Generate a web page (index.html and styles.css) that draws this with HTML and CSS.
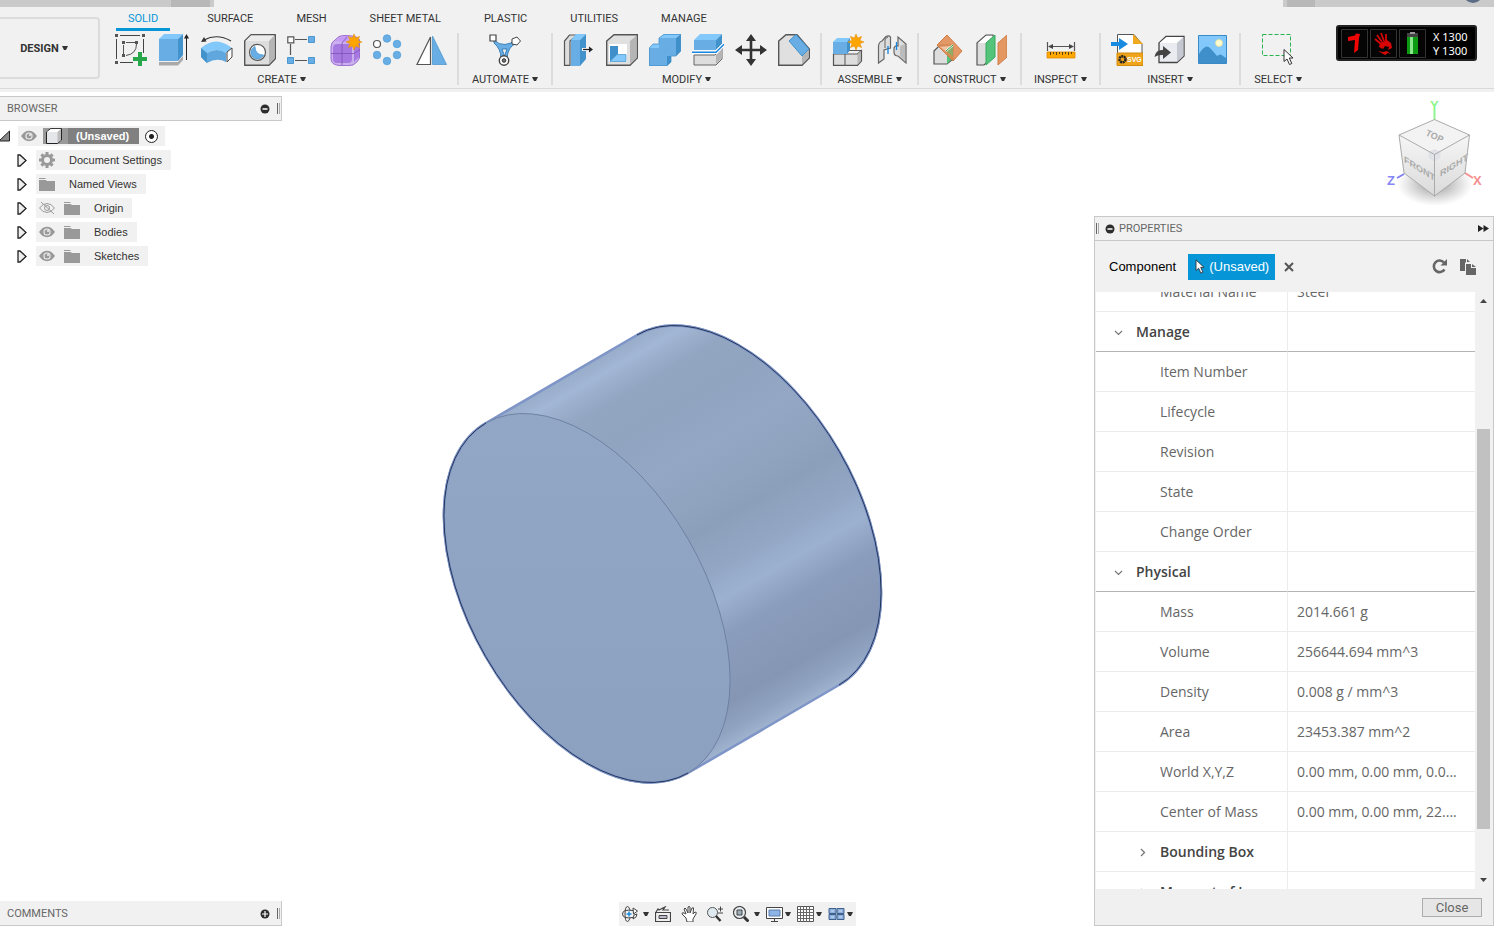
FILE: index.html
```html
<!DOCTYPE html>
<html lang="en">
<head>
    <meta charset="UTF-8">
    <meta name="viewport" content="width=device-width, initial-scale=1.0">
    <title>Design - Unsaved</title>
    <link rel="stylesheet" href="styles.css">
</head>
<body>
    <!-- shared icon shapes -->
    <svg class="defs" width="0" height="0" aria-hidden="true">
        <symbol id="caret" viewBox="0 0 6 5"><path d="M0 0h6L4 4H2z" fill="#333"/></symbol>
        <symbol id="star" viewBox="-8 -8 16 16"><path d="M0-8L1.6-3.9L5.6-5.6L3.9-1.6L8 0L3.9 1.6L5.6 5.6L1.6 3.9L0 8L-1.6 3.9L-5.6 5.6L-3.9 1.6L-8 0L-3.9-1.6L-5.6-5.6L-1.6-3.9z" fill="#ffa500" stroke="#e09010" stroke-width=".6"/></symbol>
        <symbol id="eye" viewBox="0 0 16 12"><path d="M0 6Q3.500.8 8 .8T16 6Q12.500 11.200 8 11.200T0 6z" fill="#999"/><circle cx="8" cy="6" r="3.600" fill="#f1f1f1"/><circle cx="8" cy="6" r="2.500" fill="#999"/><circle cx="9" cy="5" r="1" fill="#f1f1f1"/></symbol>
        <symbol id="eye-off" viewBox="0 0 16 12"><path d="M.5 6Q4 1.500 8 1.500T15.500 6Q12 10.500 8 10.500T.5 6zM2 0L15 12" fill="none" stroke="#999"/><circle cx="8" cy="6" r="2.500" fill="none" stroke="#999"/></symbol>
        <symbol id="folder" viewBox="0 0 16 13"><path d="M0 0h6l1 1H0zM0 2h6.500l1.500 1h8v10H0z" fill="#999"/></symbol>
        <symbol id="expand" viewBox="0 0 10 13"><path d="M1 1h2l6 5.500L3 12H1z" fill="#eee" stroke="#222" stroke-width="1.300"/></symbol>
        <symbol id="minus" viewBox="0 0 10 10"><circle cx="5" cy="5" r="4.500" fill="#2d2d2d"/><path d="M2.500 5h5" stroke="#fff" stroke-width="1.500"/></symbol>
        <symbol id="plus" viewBox="0 0 10 10"><circle cx="5" cy="5" r="4.500" fill="#2d2d2d"/><path d="M2 5h6M5 2v6" stroke="#fff" stroke-width="1.200"/></symbol>
        <symbol id="cursor" viewBox="0 0 11 17"><path d="M1 1v12l3-2.500 2.500 5.500 2.300-1-2.500-5.500H10z" fill="#fff" stroke="#333"/></symbol>
        <symbol id="chev-down" viewBox="0 0 9 6"><path d="M1 1l3.500 3.500L8 1" fill="none" stroke="#777" stroke-width="1.200"/></symbol>
        <symbol id="chev-right" viewBox="0 0 6 9"><path d="M1 1l3.500 3.500L1 8" fill="none" stroke="#777" stroke-width="1.300"/></symbol>
    </svg>

    <header class="ribbon">
        <div class="strip">
            <div class="strip-left"><span></span></div>
            <div class="strip-right"><span></span><svg width="22" height="7"><circle cx="11" cy="-7" r="10" fill="#5c6c84"/></svg></div>
        </div>

        <div class="ribbon-main">
            <button class="workspace-btn">DESIGN <svg class="caret"><use href="#caret"/></svg></button>

            <div class="ribbon-center">
                <nav class="tabs">
                    <button class="tab active">SOLID</button>
                    <button class="tab">SURFACE</button>
                    <button class="tab">MESH</button>
                    <button class="tab">SHEET METAL</button>
                    <button class="tab">PLASTIC</button>
                    <button class="tab">UTILITIES</button>
                    <button class="tab">MANAGE</button>
                </nav>

                <div class="groups">
                    <section class="group">
                        <div class="tools">
                            <button aria-label="Create Sketch"><svg viewBox="0 0 32 32">
                                <path d="M5 1.500h20M1.500 5v20M28.500 5v14M5 28.500h13" fill="none" stroke="#444"/>
                                <path d="M11 8.500h9M8.500 11v9M21.500 10q0 10-10.500 11.500" fill="none" stroke="#555"/>
                                <path d="M0 0h3v3H0zM27 0h3v3h-3zM0 27h3v3H0zM7 7h3v3H7zM20 7h3v3h-3zM7 20h3v3H7z" fill="#555"/>
                                <path d="M23 18h4v5h5v4h-5v5h-4v-5h-5v-4h5z" fill="#26a84a"/>
                            </svg></button>
                            <button aria-label="Extrude"><svg viewBox="0 0 32 32">
                                <path d="M1 28h19l5-6v4l-5 5.500H1z" fill="#aaa"/>
                                <path d="M1 5h19v22H1z" fill="#68aee4"/><path d="M1 5l5-5h19l-5 5z" fill="#83c8fa"/><path d="M20 5l5-5v21l-5 6z" fill="#4292cc"/>
                                <path d="M28.500 3v23" stroke="#222"/><path d="M28.500 0l2.500 4.500h-5z" fill="#222"/>
                            </svg></button>
                            <button aria-label="Revolve"><svg viewBox="0 0 32 32">
                                <path d="M0 14Q15 1 31 14L25 19Q15 13 6 19z" fill="#83c8fa"/>
                                <path d="M0 14L6 19Q16 13 25 19v9Q16 23 6 29L0 23z" fill="#5fa7dd"/><path d="M0 14l6 5v10l-6-6z" fill="#4292cc"/>
                                <path d="M26 18l5-4v9l-5 5z" fill="#fff" stroke="#444"/>
                                <path d="M3 6Q16-1 30 7" fill="none" stroke="#333" stroke-width="1.200"/><path d="M0 8l3-5 2.500 4.500z" fill="#333"/>
                            </svg></button>
                            <button aria-label="Hole"><svg viewBox="0 0 32 32">
                                <path d="M.7 7L7 .7h24.300v24L25 31.300H.7z" fill="#ddd" stroke="#555" stroke-width="1.400" stroke-linejoin="round"/>
                                <path d="M1.500 7L7 1.400h23L25 7z" fill="#ececec"/><path d="M25 7l5.500-5.500V24L25 30.500z" fill="#b5b5b5"/>
                                <circle cx="13.500" cy="18.300" r="8" fill="#fff" stroke="#555" stroke-width="1.200"/><path d="M11 12.500A6.500 6.500 0 1 0 19.500 21Q11 21 11 12.500z" fill="#68aee4" stroke="#4292cc" stroke-width=".7"/>
                            </svg></button>
                            <button aria-label="Pattern"><svg viewBox="0 0 32 32">
                                <path d="M8 5.500h12M3.500 10v11M8 26.500h12" stroke="#555" stroke-width="1.200"/>
                                <path d="M.8 2.800h6v6h-6z" fill="#fff" stroke="#555" stroke-width="1.200"/>
                                <path d="M21.500 2.500h6v6h-6zM.5 23.500h6v6h-6zM21.500 23.500h6v6h-6z" fill="#68aee4" stroke="#4b98d1"/>
                            </svg></button>
                            <button aria-label="Create Form"><svg viewBox="0 0 32 32">
                                <path d="M1 13Q1 8 5 6L9 2.500Q11 1.500 16 1.500Q29 2 29.500 6V24Q28 28 23 31Q18 32 10 31.500Q1 31 1 25z" fill="#cbb0ee" stroke="#9b6dd2"/>
                                <path d="M5 7Q10 2 14 2h7l-5 6z" fill="#c59bf5"/>
                                <path d="M3 14Q3 10 7 10h11q4 0 4 4v11q0 4-4 4H7q-4 0-4-4z" fill="#a679e0"/>
                                <path d="M24 13l5-4v14l-5 5z" fill="#a679e0"/>
                                <path d="M12 9v22M1 19.500h23l6-4M12 9l5-6" fill="none" stroke="#7d4fb8" stroke-width=".8"/>
                                <use href="#star" x="16" y="0" width="16" height="16"/>
                            </svg></button>
                            <button aria-label="Circular Pattern"><svg viewBox="0 0 32 32">
                                <g fill="#68aee4" stroke="#4b9bd8" stroke-width=".7"><circle cx="14" cy="4.500" r="3.800"/><circle cx="24" cy="10" r="3.800"/><circle cx="24" cy="21" r="3.800"/><circle cx="14" cy="27" r="3.800"/><circle cx="4" cy="21" r="3.800"/></g>
                                <circle cx="4" cy="10" r="3.500" fill="#fff" stroke="#555" stroke-width="1.200"/>
                            </svg></button>
                            <button aria-label="Mirror"><svg viewBox="0 0 32 32">
                                <path d="M14.500 3v27.500H1z" fill="#fff" stroke="#555" stroke-width="1.200"/><path d="M16.500 2l14 28.500h-14z" fill="#68aee4" stroke="#4292cc" stroke-width=".7"/>
                            </svg></button>
                        </div>
                        <button class="group-label">CREATE <svg class="caret"><use href="#caret"/></svg></button>
                    </section>

                    <section class="group">
                        <div class="tools">
                            <button aria-label="Automated Modeling"><svg viewBox="0 0 32 32">
                                <path d="M5 6Q10 11 16 10.500T26 6L26 10Q19 13 18 24H12Q12 15 5 9z" fill="#68aee4" stroke="#397fb6"/><path d="M13 15h5l-2.500 7z" fill="#f1f1f1" stroke="#397fb6"/>
                                <path d="M1 1h6v6H1z" fill="#fff" stroke="#444" stroke-width="1.200"/><path d="M28 3l3.500 4-3.500 4-5-1V5z" fill="#fff" stroke="#444"/>
                                <circle cx="15" cy="26.500" r="4.700" fill="#fff" stroke="#444" stroke-width="1.400"/><circle cx="15" cy="26.500" r="1.800" fill="#777" stroke="#333"/>
                            </svg></button>
                        </div>
                        <button class="group-label">AUTOMATE <svg class="caret"><use href="#caret"/></svg></button>
                    </section>

                    <section class="group">
                        <div class="tools">
                            <button aria-label="Press Pull"><svg viewBox="0 0 32 32">
                                <path d="M7 7v24.300H1.500V7l5-6H14z" fill="#ddd" stroke="#555" stroke-width="1.200"/>
                                <path d="M8 6h9v26H8z" fill="#68aee4"/><path d="M8 6l5-6h10l-6 6z" fill="#83c8fa"/><path d="M17 6l6-6v25l-6 7z" fill="#4292cc"/>
                                <path d="M19 15.500h8" stroke="#fff" stroke-width="3"/><path d="M20 15.500h7" stroke="#222" stroke-width="1.300"/><path d="M26 12.500l4 3-4 3z" fill="#222"/>
                            </svg></button>
                            <button aria-label="Shell"><svg viewBox="0 0 32 32">
                                <path d="M.7 7L8 .7h23.300V24L24 31.300H.7z" fill="#e0e0e0" stroke="#555" stroke-width="1.400"/><path d="M24 7l6.500-5.500V24L24 30.500z" fill="#b5b5b5"/>
                                <path d="M3 10h18v18H3z" fill="#fff"/><path d="M4 12h8v8l-8 7.500z" fill="#3e8fca"/><path d="M4 27.500l7-7h9v7z" fill="#83c8fa" stroke="#4292cc" stroke-width=".7"/>
                            </svg></button>
                            <button aria-label="Combine"><svg viewBox="0 0 32 32">
                                <path d="M0 14h10V4h17v18h-9v10H0z" fill="#68aee4"/><path d="M0 14l4-4h6v4zM10 4l5-4h17l-5 4z" fill="#83c8fa"/><path d="M27 4l5-4v17l-5 5h-5v6l-4 4V22h9z" fill="#3f8fca"/><path d="M.4 31.600V14L4 10h6V4l5-3.600h16.600V17L27 22h-5v6l-4 3.600z" fill="none" stroke="#4793cc" stroke-width=".8"/>
                            </svg></button>
                            <button aria-label="Split Body"><svg viewBox="0 0 32 32">
                                <path d="M2 21h21l7-7v11l-6 6H2z" fill="#ddd" stroke="#666"/><path d="M24 21l6-6v9l-6 6z" fill="#b5b5b5"/>
                                <path d="M2 6h22v10H2z" fill="#68aee4"/><path d="M2 6l6-6h22l-6 6z" fill="#83c8fa"/><path d="M24 6l6-6v10l-6 6z" fill="#4292cc"/>
                                <path d="M0 18.300h24l8-8" fill="none" stroke="#fff" stroke-width="3.500"/><path d="M0 18.300h24l8-8" fill="none" stroke="#1585e0" stroke-width="1.400"/>
                            </svg></button>
                            <button aria-label="Move"><svg viewBox="0 0 32 32">
                                <path d="M16 5v22M5 16h22" stroke="#333" stroke-width="2.600"/><path d="M16 0l5 7H11zM16 32l5-7H11zM0 16l7-5v10zM32 16l-7-5v10z" fill="#333"/>
                            </svg></button>
                            <button aria-label="Chamfer"><svg viewBox="0 0 32 32">
                                <path d="M.7 7L8 .7h11L31.300 15v9L24 31.300H.7z" fill="#e0e0e0" stroke="#555" stroke-width="1.400"/><path d="M24 22l6.500-6v8L24 30.500z" fill="#b5b5b5"/><path d="M11 7l7-6.500L31 15l-7 7z" fill="#68aee4" stroke="#4292cc"/>
                            </svg></button>
                        </div>
                        <button class="group-label">MODIFY <svg class="caret"><use href="#caret"/></svg></button>
                    </section>

                    <section class="group">
                        <div class="tools">
                            <button aria-label="New Component"><svg viewBox="0 0 32 32">
                                <path d="M1.500 20h24l4-3.500V27l-4 4.300h-24z" fill="#ddd" stroke="#555" stroke-width="1.200"/><path d="M13 20v11M13 20l4-3.500h12" fill="none" stroke="#555"/><path d="M25.500 20l3.500-3v10l-3.500 3.500z" fill="#b5b5b5"/>
                                <path d="M1 8h14v12H1z" fill="#68aee4"/><path d="M1 8l4-4h13l-3 4z" fill="#83c8fa"/><path d="M15 8l3-4v12l-3 4z" fill="#4292cc"/>
                                <use href="#star" x="16" y="0" width="16" height="16"/>
                            </svg></button>
                            <button aria-label="Joint"><svg viewBox="0 0 32 32">
                                <path d="M3.500 29V12Q4 8 7 7L11 2.500q3-1.500 4.500.5V14L9 16v9z" fill="#ddd" stroke="#666" stroke-width="1.200"/><path d="M10 14V6q0-2 3-3" fill="none" stroke="#666"/>
                                <path d="M23 12V3l8 7v19l-8-7q-4 0-4-4v-4q1-3 4-2z" fill="#ddd" stroke="#666" stroke-width="1.200"/><path d="M25 12v10l5 5V10z" fill="#bcbcbc"/>
                                <path d="M13 12v8M21.500 8v8" stroke="#1585e0" stroke-width="1.300"/>
                            </svg></button>
                        </div>
                        <button class="group-label">ASSEMBLE <svg class="caret"><use href="#caret"/></svg></button>
                    </section>

                    <section class="group">
                        <div class="tools">
                            <button aria-label="Offset Plane"><svg viewBox="0 0 32 32">
                                <path d="M2 17l6-6h13v14l-6 5H2z" fill="#ddd" stroke="#555" stroke-width="1.200"/><path d="M15 18l6-6v12l-6 6z" fill="#55c47b"/>
                                <path d="M15 1l15 16-9 10L5 11z" fill="#e2884c" fill-opacity=".85" stroke="#ce7b42"/><path d="M8 13l11-1-5 5z" fill="#f0c5a8"/><path d="M14 17l7-6v11z" fill="#8eae68"/><path d="M14 17l7-6" stroke="#fff" stroke-width="2"/><path d="M14 17l7-6" stroke="#1aa34c"/>
                            </svg></button>
                            <button aria-label="Midplane"><svg viewBox="0 0 32 32">
                                <path d="M2 9l9-8h7v22l-9 8H2z" fill="#ddd" stroke="#555" stroke-width="1.200"/><path d="M3 9l8-7h7L11 9z" fill="#fff"/><path d="M11 9l9-8v22l-9 8z" fill="#55c47b" stroke="#36a95d"/><path d="M23 9l9-8v22l-9 8z" fill="#e59762" stroke="#cd7e49"/>
                            </svg></button>
                        </div>
                        <button class="group-label">CONSTRUCT <svg class="caret"><use href="#caret"/></svg></button>
                    </section>

                    <section class="group">
                        <div class="tools">
                            <button aria-label="Measure"><svg viewBox="0 0 32 32">
                                <path d="M2.500 8v9M29.500 8v9M5 12.500h22" stroke="#555" stroke-width="1.200"/><path d="M3 12.500l5-2.500v5zM29 12.500l-5-2.500v5z" fill="#444"/>
                                <path d="M2 18h28v6H2z" fill="#ffa800" stroke="#dd8b06" stroke-width=".8"/><path d="M5.500 18v3M8.500 18v2M11.500 18v3M14.500 18v2M17.500 18v3M20.500 18v2M23.500 18v3M26.500 18v2" stroke="#594315"/>
                            </svg></button>
                        </div>
                        <button class="group-label">INSPECT <svg class="caret"><use href="#caret"/></svg></button>
                    </section>

                    <section class="group">
                        <div class="tools">
                            <button aria-label="Insert SVG"><svg viewBox="0 0 32 32">
                                <path d="M6.500.5H23l8 9.500v10H6.500z" fill="#fff" stroke="#555"/><path d="M22 0l10 10H22z" fill="#f0aa20"/>
                                <path d="M0 8h8V4l9 6-9 6v-4H0z" fill="#188be0"/>
                                <path d="M6 19h26v12.500H6z" fill="#efa41c" stroke="#d08a0c"/><circle cx="11.500" cy="25.300" r="3" fill="none" stroke="#222" stroke-width="2.500" stroke-dasharray="2 .5"/>
                                <text x="16" y="28" class="svg-label">SVG</text>
                            </svg></button>
                            <button aria-label="Insert Derive"><svg viewBox="0 0 32 32">
                                <path d="M5 9l7-6.500h18V22l-7 6.500H5z" fill="#e9ebf0" stroke="#444" stroke-width="1.300"/><path d="M5.500 9l7-6h17L23 9z" fill="#fff"/><path d="M23 9l6.500-6v19L23 28z" fill="#c5c8d1"/>
                                <path d="M.5 23Q2 15 9 16v-4l8 6.500L9 25v-4q-5-.5-8.500 2z" fill="#444"/>
                            </svg></button>
                            <button aria-label="Canvas"><svg viewBox="0 0 32 32">
                                <path d="M1.500 1.500h28v28h-28z" fill="#83c8fa"/><path d="M2 20Q9 8 14 15l6 7q4-3 6 0l3 2v5H2z" fill="#3f8fca"/><circle cx="22" cy="9" r="3.500" fill="#fffbd0" stroke="#e8dc9a" stroke-width=".7"/><path d="M1.500 1.500h28v28h-28z" fill="none" stroke="#388ac8"/>
                            </svg></button>
                        </div>
                        <button class="group-label">INSERT <svg class="caret"><use href="#caret"/></svg></button>
                    </section>

                    <section class="group">
                        <div class="tools">
                            <button aria-label="Select"><svg viewBox="0 0 32 32">
                                <path d="M.5.500h28v21H.5z" fill="none" stroke="#27b34d" stroke-dasharray="4 2"/><use href="#cursor" x="21" y="14.500" width="11" height="17"/>
                            </svg></button>
                        </div>
                        <button class="group-label">SELECT <svg class="caret"><use href="#caret"/></svg></button>
                    </section>
                </div>
            </div>

            <!-- macro status widget -->
            <div class="status">
                <svg width="27" height="29" viewBox="0 0 27 29"><path d="M.5.5h26v28H.5z" fill="#050505" stroke="#333"/><path d="M7 8l7-1.500 1-2 4 .5-1 4-1 12-4 3 1-13-7 1z" fill="#f00505"/></svg>
                <svg width="27" height="29" viewBox="0 0 27 29"><path d="M.5.5h26v28H.5z" fill="#050505" stroke="#333"/><path d="M11 15L5 10M12 13L7 6M14 12L11 4M16 13L16 5" fill="none" stroke="#d80505" stroke-width="1.800"/><path d="M10 14l7-3 4 3 1 5-4 2 1-3-4-1-2 3-4-2zM8 22l5 1 4-1 4 3-3-1-3 2zM8 24l3 1z" fill="#d80505"/></svg>
                <svg width="27" height="29" viewBox="0 0 27 29"><path d="M.5.5h26v28H.5z" fill="#050505" stroke="#333"/><path d="M8 4h11v21H8z" fill="#0c9a12"/><path d="M11 8h3v17h-3z" fill="#8be98d"/><path d="M8 4h11v4H8z" fill="#444"/><path d="M11 3h5v2h-5z" fill="#999"/></svg>
                <div class="status-text">X 1300<br>Y 1300</div>
            </div>
        </div>
    </header>

    <main class="workspace">
        <aside class="left">
            <div class="panel-head">
                <span>BROWSER</span>
                <button aria-label="Collapse browser"><svg width="10" height="10"><use href="#minus"/></svg></button>
                <i class="grip"></i>
            </div>

            <ul class="tree">
                <li class="root">
                    <svg width="11" height="12" viewBox="0 0 11 12"><path d="M9.500 1v10H-1z" fill="#888" stroke="#222"/></svg>
                    <div class="node">
                        <svg width="16" height="12"><use href="#eye"/></svg>
                        <div class="selected">
                            <svg width="25" height="16" viewBox="0 0 25 16"><path d="M3.500 4l4-3.300h11V12l-4 3.500h-11z" fill="#e4e6e9" stroke="#222"/><path d="M4 4l4-3h10l-3.500 3z" fill="#fff"/><path d="M14.500 4L18 1v11l-3.500 3z" fill="#bbb"/></svg>
                            <span>(Unsaved)</span>
                        </div>
                        <input type="radio" name="active-component" aria-label="Activate component" checked>
                    </div>
                </li>
                <li>
                    <svg width="10" height="13"><use href="#expand"/></svg>
                    <div class="node"><svg width="16" height="16" viewBox="-8 -8 16 16"><circle r="4.500" fill="none" stroke="#999" stroke-width="3"/><path d="M0-8V-5M0 8V5M-8 0H-5M8 0H5M-5.600-5.600l2 2M5.600 5.600l-2-2M-5.600 5.600l2-2M5.600-5.600l-2 2" stroke="#999" stroke-width="3"/></svg><span>Document Settings</span></div>
                </li>
                <li>
                    <svg width="10" height="13"><use href="#expand"/></svg>
                    <div class="node"><svg width="16" height="13"><use href="#folder"/></svg><span>Named Views</span></div>
                </li>
                <li>
                    <svg width="10" height="13"><use href="#expand"/></svg>
                    <div class="node"><svg width="16" height="12"><use href="#eye-off"/></svg><svg width="16" height="13"><use href="#folder"/></svg><span>Origin</span></div>
                </li>
                <li>
                    <svg width="10" height="13"><use href="#expand"/></svg>
                    <div class="node"><svg width="16" height="12"><use href="#eye"/></svg><svg width="16" height="13"><use href="#folder"/></svg><span>Bodies</span></div>
                </li>
                <li>
                    <svg width="10" height="13"><use href="#expand"/></svg>
                    <div class="node"><svg width="16" height="12"><use href="#eye"/></svg><svg width="16" height="13"><use href="#folder"/></svg><span>Sketches</span></div>
                </li>
            </ul>

            <div class="panel-head comments">
                <span>COMMENTS</span>
                <button aria-label="Expand comments"><svg width="10" height="10"><use href="#plus"/></svg></button>
                <i class="grip"></i>
            </div>
        </aside>

        <div class="canvas">
            <svg class="model" width="446" height="468" viewBox="440 320 446 468">
                <defs>
                    <linearGradient id="side" gradientUnits="userSpaceOnUse" x1="486" y1="423" x2="688" y2="773">
                        <stop offset="0" stop-color="#98adca"/>
                        <stop offset=".04" stop-color="#a2b6d5"/>
                        <stop offset=".11" stop-color="#92a6c2"/>
                        <stop offset=".2" stop-color="#90a3bf"/>
                        <stop offset=".32" stop-color="#94a8c5"/>
                        <stop offset=".5" stop-color="#8c9fba"/>
                        <stop offset=".6" stop-color="#93a7c5"/>
                        <stop offset=".67" stop-color="#9cb0d0"/>
                        <stop offset=".75" stop-color="#8b9dbc"/>
                        <stop offset=".9" stop-color="#8496b3"/>
                        <stop offset=".96" stop-color="#90a3c0"/>
                        <stop offset="1" stop-color="#a0b4d0"/>
                    </linearGradient>
                    <linearGradient id="face" x1="0" y1="0" x2="0" y2="1">
                        <stop offset="0" stop-color="#92a7c5"/>
                        <stop offset="1" stop-color="#8ca0bf"/>
                    </linearGradient>
                </defs>
                <path d="M486 423L637 335A202 117 60 0 1 839 685L688 773A202 117 60 0 1 486 423z" fill="url(#side)" stroke="#7f95c8" stroke-width="2.500"/>
                <path d="M486 423A202 117 60 0 1 688 773A202 117 60 0 1 486 423z" fill="url(#face)" stroke="#697e9f" stroke-width=".9"/>
                <path d="M637 335A202 117 60 0 1 839 685M688 773A202 117 60 0 1 486 423" fill="none" stroke="#7f95c8" stroke-width="2.500"/>
                <path d="M637 335A202 117 60 0 1 839 685M688 773A202 117 60 0 1 486 423" fill="none" stroke="#233657" stroke-width="1"/>
            </svg>

            <div class="navbar">
                <button aria-label="Orbit"><svg width="16" height="16" viewBox="0 0 16 16"><path d="M11 11.500Q.5 13 .5 8T11 4.500M8 12Q7 15.500 5.500 15.500Q3 15.500 3 8T5.500.5Q7 .5 8 4" fill="none" stroke="#444"/><path d="M4.500 8h5M7 5.500v5" stroke="#188be0" stroke-width="1.500"/><path d="M11 2l4.500 3-4 3zM12 9l3-1-1 3-3 2z" fill="#fff" stroke="#444"/></svg></button>
                <button class="drop" aria-label="Orbit options"><svg class="caret"><use href="#caret"/></svg></button>
                <button aria-label="Look At"><svg width="16" height="16" viewBox="0 0 16 16"><path d="M.5 6.500h15v9H.5zM1 6l2-3 1 1 6-3-2 3h6" fill="none" stroke="#444" stroke-width="1.200"/><path d="M4 9.500h8v3H4z" fill="#bbc" stroke="#444"/></svg></button>
                <button aria-label="Pan"><svg width="16" height="16" viewBox="0 0 16 16"><path d="M5 12L1 8q0-2 2-1l2 1-2-5q1-2 2 0l2 4L7 1q1-1 2 0v6l2-5q2-1 1.500 1L12 8l2-2q2 0 1 2l-3 5v3H6z" fill="#fff" stroke="#444" stroke-linejoin="round"/></svg></button>
                <button aria-label="Zoom"><svg width="16" height="16" viewBox="0 0 16 16"><circle cx="5.500" cy="6.500" r="5" fill="#dfeaf0" stroke="#555"/><path d="M9 10l4.500 5" stroke="#333" stroke-width="2.500"/><path d="M11 3h5M13.500 .5v5M11 7h5" stroke="#444"/></svg></button>
                <button aria-label="Fit"><svg width="16" height="16" viewBox="0 0 16 16"><circle cx="6.500" cy="6.500" r="6" fill="#e7edf0" stroke="#444" stroke-width="1.200"/><path d="M4 4h5v5H4z" fill="#9eafba" stroke="#444"/><path d="M11 11l4.500 4.500" stroke="#333" stroke-width="3"/></svg></button>
                <button class="drop" aria-label="Fit options"><svg class="caret"><use href="#caret"/></svg></button>
                <button class="tight" aria-label="Display Settings"><svg width="17" height="16" viewBox="0 0 17 16"><path d="M.5 1.500h16v11H.5zM5 15.500h7M8.500 13v2" fill="#fff" stroke="#444"/><path d="M3 4h11v6H3z" fill="#8db4e5" stroke="#587dab"/></svg></button>
                <button class="drop" aria-label="Display options"><svg class="caret"><use href="#caret"/></svg></button>
                <button class="tight" aria-label="Grid and Snaps"><svg width="17" height="16" viewBox="0 0 17 16"><path d="M.5.5h16v15H.5z" fill="#fff" stroke="#555"/><path d="M3.500 0v16M6.500 0v16M9.500 0v16M12.500 0v16M0 3.500h17M0 6.500h17M0 9.500h17M0 12.500h17" stroke="#666"/></svg></button>
                <button class="drop" aria-label="Grid options"><svg class="caret"><use href="#caret"/></svg></button>
                <button class="tight" aria-label="Viewports"><svg width="17" height="16" viewBox="0 0 17 16"><path d="M1 2.500h7v5H1zM9 2.500h7v5H9zM1 8.500h7v5H1zM9 8.500h7v5H9z" fill="#8db0dc" stroke="#40608d"/><path d="M3.500 4.500h2v1h-2zM11.500 4.500h2v1h-2zM3.500 10.500h2v1h-2zM11.500 10.500h2v1h-2z" fill="none" stroke="#c9daf0" stroke-width=".6"/></svg></button>
                <button class="drop" aria-label="Viewport options"><svg class="caret"><use href="#caret"/></svg></button>
            </div>
        </div>

        <aside class="right">
            <div class="viewcube">
                <svg width="114" height="124" viewBox="1380 92 114 124">
                    <defs>
                        <linearGradient id="cube" x1="0" y1="0" x2="0" y2="1"><stop offset="0" stop-color="#f6f6f6"/><stop offset="1" stop-color="#dadada"/></linearGradient>
                        <radialGradient id="shade"><stop offset="0" stop-color="#777" stop-opacity=".8"/><stop offset="1" stop-color="#999" stop-opacity="0"/></radialGradient>
                    </defs>
                    <ellipse cx="1435" cy="184" rx="38" ry="22" fill="url(#shade)"/>
                    <path d="M1434.500 120v-10" stroke="#90f590" stroke-width="2"/>
                    <path d="M1404 174l-7 4" stroke="#8080f0" stroke-width="2"/>
                    <path d="M1465 173l8 5" stroke="#f59090" stroke-width="2"/>
                    <path d="M1399 135l35.500 19.500V196L1404 173z" fill="url(#cube)"/>
                    <path d="M1469.500 135l-35 19.500V196L1465 173z" fill="url(#cube)"/>
                    <path d="M1434.500 119.500l35 15.500-35 19.500L1399 135z" fill="#f3f3f3"/>
                    <path d="M1434.500 149l6 3v6l-6 4-6-4v-6z" fill="#e0e2e8"/>
                    <path d="M1434.500 119.500l35 15.500-4.500 38-30.500 23-30.500-23-5-38zM1399 135l35.500 19.500 35-19.500M1434.500 154.500V196" fill="none" stroke="#aaa"/>
                    <text class="axis" x="1430" y="110" fill="#8cf58c">Y</text>
                    <text class="axis" x="1387" y="185" fill="#8585f5">Z</text>
                    <text class="axis" x="1473" y="185" fill="#f59090">X</text>
                    <text class="face" transform="translate(1425 135) rotate(25)">TOP</text>
                    <text class="face" transform="translate(1404 162) skewY(32)">FRONT</text>
                    <text class="face" transform="translate(1440 177) skewY(-32)">RIGHT</text>
                </svg>
            </div>

            <section class="properties">
                <div class="panel-head">
                    <i class="grip"></i>
                    <button aria-label="Collapse properties"><svg width="10" height="10"><use href="#minus"/></svg></button>
                    <span>PROPERTIES</span>
                    <button aria-label="Dock"><svg width="11" height="7" viewBox="0 0 11 7"><path d="M0 0l5.500 3.500L0 7zM5.500 0L11 3.500 5.500 7z" fill="#222"/></svg></button>
                </div>

                <div class="selection">
                    <span>Component</span>
                    <button class="pill"><svg width="10" height="15"><use href="#cursor"/></svg>(Unsaved)</button>
                    <button aria-label="Clear selection"><svg width="10" height="10" viewBox="0 0 10 10"><path d="M1 1l8 8M9 1l-8 8" stroke="#555" stroke-width="2"/></svg></button>
                    <button class="refresh" aria-label="Refresh"><svg width="16" height="15" viewBox="0 0 16 15"><path d="M12.500 10.500A5.800 5.800 0 1 1 12 3.500" fill="none" stroke="#666" stroke-width="2.600"/><path d="M15 0v6.500H8.500z" fill="#666"/></svg></button>
                    <button aria-label="Copy"><svg width="17" height="16" viewBox="0 0 17 16"><path d="M0 0h6v3.500h-1V12H0zM7 0l3 3H7z" fill="#666"/><path d="M6 5h5v4h5v7H6z" fill="#666"/><path d="M12 5l4 3h-4z" fill="#666"/></svg></button>
                </div>

                <div class="prop-body">
                    <div class="prop-view">
                        <table>
                            <tr><th>Material Name</th><td>Steel</td></tr>
                            <tr class="section"><th><svg width="9" height="6"><use href="#chev-down"/></svg>Manage</th><td></td></tr>
                            <tr><th>Item Number</th><td></td></tr>
                            <tr><th>Lifecycle</th><td></td></tr>
                            <tr><th>Revision</th><td></td></tr>
                            <tr><th>State</th><td></td></tr>
                            <tr><th>Change Order</th><td></td></tr>
                            <tr class="section"><th><svg width="9" height="6"><use href="#chev-down"/></svg>Physical</th><td></td></tr>
                            <tr><th>Mass</th><td>2014.661 g</td></tr>
                            <tr><th>Volume</th><td>256644.694 mm^3</td></tr>
                            <tr><th>Density</th><td>0.008 g / mm^3</td></tr>
                            <tr><th>Area</th><td>23453.387 mm^2</td></tr>
                            <tr><th>World X,Y,Z</th><td>0.00 mm, 0.00 mm, 0.0...</td></tr>
                            <tr><th>Center of Mass</th><td>0.00 mm, 0.00 mm, 22....</td></tr>
                            <tr class="sub"><th><svg width="6" height="9"><use href="#chev-right"/></svg>Bounding Box</th><td></td></tr>
                            <tr class="sub"><th><svg width="6" height="9"><use href="#chev-right"/></svg>Moment of I...</th><td></td></tr>
                        </table>
                    </div>
                    <div class="scrollbar">
                        <svg width="7" height="4"><path d="M0 4L3.500 0 7 4z" fill="#444"/></svg>
                        <div class="track"><div class="thumb"></div></div>
                        <svg width="7" height="4"><path d="M0 0l3.500 4L7 0z" fill="#444"/></svg>
                    </div>
                </div>

                <div class="prop-foot">
                    <button class="close-btn">Close</button>
                </div>
            </section>
        </aside>
    </main>
</body>
</html>
```

FILE: styles.css
```css
* {
    box-sizing: border-box;
}
body {
    margin: 0;
    height: 100vh;
    display: flex;
    flex-direction: column;
    overflow: hidden;
    background: #fff;
    color: #333;
    font-family: Roboto, "Liberation Sans", sans-serif;
    font-size: 11px;
    line-height: 14px;
}
button {
    padding: 0;
    border: 0;
    background: none;
    color: inherit;
    font: inherit;
    cursor: pointer;
}
svg {
    display: block;
    flex: none;
}
.defs {
    position: absolute;
}
.caret {
    width: 6px;
    height: 5px;
}

/* Ribbon */
.ribbon {
    height: 92px;
    flex: none;
    background: #f1f1f1;
}
.strip {
    display: flex;
    justify-content: space-between;
    height: 7px;
}
.strip-left,
.strip-right {
    display: flex;
    justify-content: space-between;
    background: #cacaca;
}
.strip-left {
    width: 214px;
    padding: 0 4px 0 171px;
}
.strip-right {
    width: 211px;
    padding: 0 10px 0 4px;
}
.strip-left span {
    width: 39px;
    background: #b8b8b8;
}
.strip-right span {
    width: 28px;
    background: #b8b8b8;
}
.ribbon-main {
    display: flex;
    align-items: flex-start;
    height: 82px;
    border-bottom: 1px solid #dadada;
}
.workspace-btn {
    display: flex;
    align-items: center;
    justify-content: center;
    gap: 3px;
    width: 100px;
    height: 62px;
    margin-top: 10px;
    padding: 2px 10px 0 0;
    border: 2px solid #dcdcdc;
    border-left: 0;
    border-radius: 0 4px 4px 0;
    font-weight: bold;
}
.ribbon-center {
    flex: 1;
}
.tabs {
    display: flex;
    gap: 19px;
    padding-left: 16px;
}
.tab {
    height: 24px;
    padding: 2px 12px 0;
    border-bottom: 3px solid transparent;
}
.tab.active {
    margin-right: 6px;
    color: #0696d7;
    border-color: #0696d7;
}
.groups {
    display: grid;
    grid-template-columns: 353px 94px 269px 97px 103px 79px 140px 74px;
    margin: 2px 0 0 6px;
}
.group {
    display: flex;
    flex-direction: column;
    align-items: center;
    height: 52px;
    padding-top: 1px;
    border-right: 2px solid #dcdcdc;
}
.group:last-child {
    border-right: 0;
}
.tools {
    display: flex;
    gap: 11px;
}
.tools svg {
    width: 32px;
    height: 32px;
}
.group-label {
    display: flex;
    align-items: center;
    gap: 3px;
    margin-top: 7px;
}
.group-label svg,
.workspace-btn svg {
    margin-bottom: 2px;
}
.svg-label {
    font: bold 7px "Liberation Sans", sans-serif;
    fill: #fff;
}
.status {
    display: flex;
    align-items: center;
    gap: 2px;
    width: 141px;
    height: 36px;
    margin: 18px 17px 0 0;
    padding-left: 3px;
    border: 2px solid #222;
    border-radius: 3px;
    background: #000;
}
.status-text {
    padding: 2px 0 0 5px;
    color: #fff;
    font-family: "Noto Sans", sans-serif;
}

/* Workspace */
.workspace {
    flex: 1;
    min-height: 0;
    display: grid;
    grid-template-columns: 282px 1fr 400px;
}
.left,
.right,
.canvas {
    display: flex;
    flex-direction: column;
    min-height: 0;
}
.left {
    padding-top: 4px;
}
.panel-head {
    display: flex;
    align-items: center;
    gap: 7px;
    flex: none;
    height: 25px;
    padding: 0 1px 0 7px;
    border: 1px solid #c8c8c8;
    border-left: 0;
    background: #f1f1f1;
    color: #666;
}
.panel-head span {
    flex: 1;
}
.grip {
    width: 3px;
    height: 11px;
    border-left: 1px solid #666;
    border-right: 1px solid #aaa;
}
.comments {
    margin-top: auto;
    padding-top: 1px;
    border-top: 0;
}
.tree {
    display: flex;
    flex-direction: column;
    gap: 4px;
    margin: 5px 0 0;
    padding: 0;
    list-style: none;
    font-family: "Liberation Sans", sans-serif;
}
.tree li {
    display: flex;
    align-items: center;
    gap: 9px;
    padding-left: 17px;
}
.tree .root {
    gap: 7px;
    padding-left: 0;
}
.node {
    display: flex;
    align-items: center;
    gap: 9px;
    height: 20px;
    padding: 0 9px 0 3px;
    background: #f1f1f1;
}
.node > span {
    padding-left: 5px;
}
.root .node {
    gap: 6px;
    padding-right: 7px;
}
.selected {
    display: flex;
    align-items: center;
    height: 16px;
    padding-right: 10px;
    background: linear-gradient(to right, #999 25px, #808080 25px);
    color: #fff;
    font-weight: bold;
}
.selected span {
    padding-left: 8px;
}
.root input {
    appearance: none;
    width: 13px;
    height: 13px;
    margin: 0;
    border: 1px solid #222;
    border-radius: 50%;
    background: radial-gradient(#222 2px, #fff 3px);
}
.model {
    align-self: center;
    margin: 228px 50px 0 0;
}
.navbar {
    display: flex;
    align-items: center;
    align-self: center;
    height: 24px;
    margin: auto 0 0 99px;
    padding-right: 2px;
    background: #f1f1f1;
}
.navbar button {
    padding: 0 5px;
}
.navbar button:first-child {
    padding-left: 3px;
}
.navbar .tight {
    padding-right: 2px;
}
.navbar .drop {
    width: 7px;
    padding: 0;
}

/* View cube */
.viewcube {
    align-self: flex-end;
}
.axis {
    font: bold 13px "Liberation Sans", sans-serif;
}
.face {
    font: bold 9px "Liberation Sans", sans-serif;
    fill: #aaa;
}

/* Properties */
.properties {
    flex: 1;
    min-height: 0;
    display: flex;
    flex-direction: column;
    border: 1px solid #c8c8c8;
    background: #f1f1f1;
}
.properties .panel-head {
    gap: 4px;
    height: 24px;
    padding: 0 4px 0 1px;
    border-width: 0 0 1px;
}
.properties .grip {
    margin-right: 2px;
}
.selection {
    display: flex;
    align-items: center;
    flex: none;
    height: 51px;
    padding: 0 16px 0 14px;
    color: #000;
    font-family: "Liberation Sans", sans-serif;
    font-size: 13px;
}
.pill {
    display: flex;
    align-items: center;
    gap: 4px;
    height: 26px;
    margin: 0 9px 0 12px;
    padding: 0 6px 0 7px;
    background: #0696d7;
    color: #fff;
}
.refresh {
    margin: 0 12px 0 auto;
}
.prop-body {
    flex: 1;
    min-height: 0;
    display: flex;
}
.prop-view {
    flex: 1;
    overflow: hidden;
    margin-left: 1px;
    background: #fff;
}
table {
    width: 100%;
    margin-top: -20px;
    border-spacing: 0;
    table-layout: fixed;
    font-family: "Open Sans", "Noto Sans", sans-serif;
    font-size: 14px;
    line-height: 20px;
}
th,
td {
    height: 40px;
    padding: 0;
    border-bottom: 1px solid #ececec;
    color: #666;
    font-weight: normal;
    text-align: left;
    white-space: nowrap;
}
th {
    width: 192px;
    padding-left: 64px;
    border-right: 1px solid #ececec;
}
td {
    padding-left: 9px;
}
th svg {
    display: inline-block;
    vertical-align: middle;
}
.section th,
.sub th {
    color: #444;
    font-weight: 600;
}
.section th,
.section td {
    border-bottom-color: #b4b4b4;
}
.section th {
    padding-left: 18px;
}
.section svg {
    margin-right: 13px;
}
.sub th {
    padding-left: 44px;
}
.sub svg {
    margin-right: 14px;
}
.scrollbar {
    display: flex;
    flex-direction: column;
    align-items: center;
    width: 18px;
    padding: 7px 1px 7px 0;
    background: #f1f1f1;
}
.track {
    flex: 1;
    width: 13px;
    padding: 126px 0 49px;
}
.thumb {
    height: 100%;
    background: #c1c1c1;
}
.prop-foot {
    display: flex;
    justify-content: flex-end;
    align-items: center;
    flex: none;
    height: 36px;
    padding-right: 11px;
    background: #f0f0f0;
}
.close-btn {
    width: 60px;
    height: 19px;
    padding-top: 1px;
    border: 1px solid #adadad;
    background: #e6e6e6;
    color: #666;
    font-size: 13px;
}
```
